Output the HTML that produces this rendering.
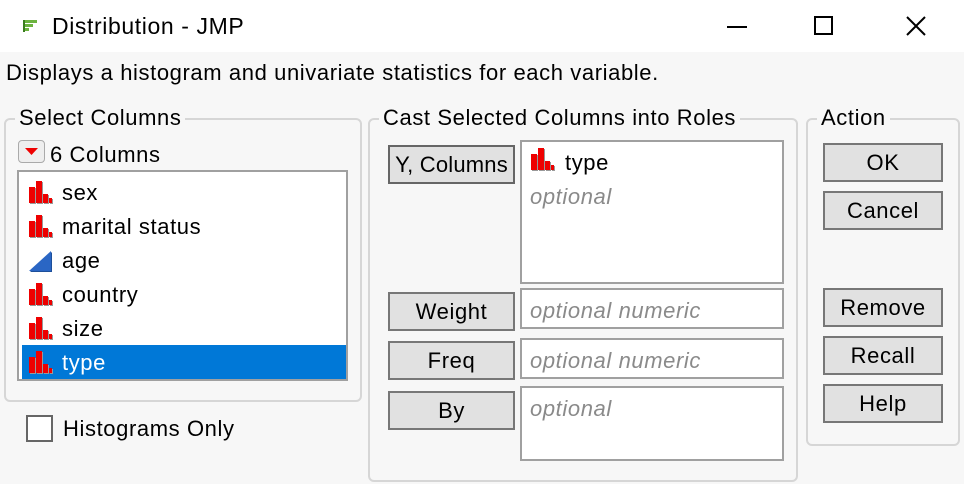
<!DOCTYPE html><html><head><style>
*{box-sizing:border-box;margin:0;padding:0}
body{width:964px;height:484px;background:#f7f7f7;font-family:"Liberation Sans",sans-serif;font-size:22px;letter-spacing:0.6px;color:#000;position:relative;overflow:hidden}
.a{position:absolute}
.tb{left:0;top:0;width:964px;height:52px;background:#fff}
.grp{position:absolute;border:2px solid #d6d6d6;border-radius:6px}
.lg{position:absolute;background:#f7f7f7;padding:0 4px;line-height:24px}
.btn{position:absolute;background:#e1e1e1;border:2px solid #777;text-align:center;line-height:36px}
.box{position:absolute;background:#fff;border:2px solid #a0a0a0}
.opt{color:#8a8a8a;font-style:italic;position:absolute;left:8px}
.it{position:absolute;left:3px;height:34px;line-height:36px;width:324px;padding-left:40px}
.ic{position:absolute;left:6px;top:6px}
</style></head><body>
<div class="a tb">
<svg class="a" style="left:22px;top:19px" width="16" height="14"><rect x="1" y="1" width="14" height="3" fill="#6cb33f"/><rect x="1" y="5" width="10" height="3" fill="#6cb33f"/><rect x="1" y="9" width="6" height="3" fill="#6cb33f"/><rect x="1" y="1" width="2" height="12" fill="#3a7d1e"/></svg>
<div class="a" style="left:52px;top:13px;font-size:23px">Distribution - JMP</div>
<div class="a" style="left:727px;top:26px;width:20px;height:2px;background:#000"></div>
<div class="a" style="left:814px;top:16px;width:19px;height:19px;border:2px solid #000"></div>
<svg class="a" style="left:905px;top:15px" width="22" height="22"><path d="M2 2L20 20M20 2L2 20" stroke="#000" stroke-width="2"/></svg>
</div>
<div class="a" style="left:6px;top:60px">Displays a histogram and univariate statistics for each variable.</div>

<div class="grp" style="left:4px;top:118px;width:358px;height:284px"></div>
<div class="lg" style="left:15px;top:106px">Select Columns</div>
<div class="a" style="left:18px;top:140px;width:27px;height:23px;border:1px solid #aaa;border-radius:4px;background:#eee"><svg width="25" height="21"><path d="M6 7h13l-6.5 7z" fill="#e00"/></svg></div>
<div class="a" style="left:50px;top:142px">6 Columns</div>
<svg width="0" height="0" style="position:absolute"><defs><g id="bar"><path d="M2 7h6v16H2zM9 1h6v22H9zM16 14h5v9h-5zM22 18h3v5h-3z" fill="#999"/><path d="M1 6h6v16H1zM8 0h6v22H8zM15 13h5v9h-5zM21 17h3v5h-3z" fill="#e00"/></g></defs></svg>
<div class="box" style="left:17px;top:170px;width:331px;height:211px">
<div class="it" style="top:3px"><svg class="ic" width="26" height="24"><use href="#bar"/></svg>sex</div>
<div class="it" style="top:37px"><svg class="ic" width="26" height="24"><use href="#bar"/></svg>marital status</div>
<div class="it" style="top:71px"><svg class="ic" width="26" height="24"><path d="M2 23L24 3v20z" fill="#1d4f9a"/><path d="M1 22L23 2v20z" fill="#2a66c4"/></svg>age</div>
<div class="it" style="top:105px"><svg class="ic" width="26" height="24"><use href="#bar"/></svg>country</div>
<div class="it" style="top:139px"><svg class="ic" width="26" height="24"><use href="#bar"/></svg>size</div>
<div class="it" style="top:173px;background:#0078d7;color:#fff"><svg class="ic" width="26" height="24"><use href="#bar"/></svg>type</div>
</div>
<div class="a" style="left:26px;top:415px;width:27px;height:27px;border:2px solid #666;background:#fff"></div>
<div class="a" style="left:63px;top:416px">Histograms Only</div>

<div class="grp" style="left:368px;top:118px;width:430px;height:364px"></div>
<div class="lg" style="left:379px;top:106px">Cast Selected Columns into Roles</div>
<div class="btn" style="left:388px;top:145px;width:127px;height:39px;border-color:#666;letter-spacing:0.2px">Y, Columns</div>
<div class="box" style="left:520px;top:140px;width:264px;height:144px">
<svg class="a" style="left:8px;top:6px" width="26" height="24"><use href="#bar"/></svg>
<div class="a" style="left:43px;top:8px">type</div>
<div class="opt" style="top:42px">optional</div></div>
<div class="btn" style="left:388px;top:292px;width:127px;height:39px">Weight</div>
<div class="box" style="left:520px;top:288px;width:264px;height:41px"><div class="opt" style="top:8px">optional numeric</div></div>
<div class="btn" style="left:388px;top:341px;width:127px;height:39px">Freq</div>
<div class="box" style="left:520px;top:338px;width:264px;height:41px"><div class="opt" style="top:8px">optional numeric</div></div>
<div class="btn" style="left:388px;top:391px;width:127px;height:39px">By</div>
<div class="box" style="left:520px;top:386px;width:264px;height:75px"><div class="opt" style="top:8px">optional</div></div>

<div class="grp" style="left:806px;top:118px;width:154px;height:328px"></div>
<div class="lg" style="left:817px;top:106px">Action</div>
<div class="btn" style="left:823px;top:143px;width:120px;height:39px">OK</div>
<div class="btn" style="left:823px;top:191px;width:120px;height:39px">Cancel</div>
<div class="btn" style="left:823px;top:288px;width:120px;height:39px">Remove</div>
<div class="btn" style="left:823px;top:336px;width:120px;height:39px">Recall</div>
<div class="btn" style="left:823px;top:384px;width:120px;height:39px">Help</div>
</body></html>
